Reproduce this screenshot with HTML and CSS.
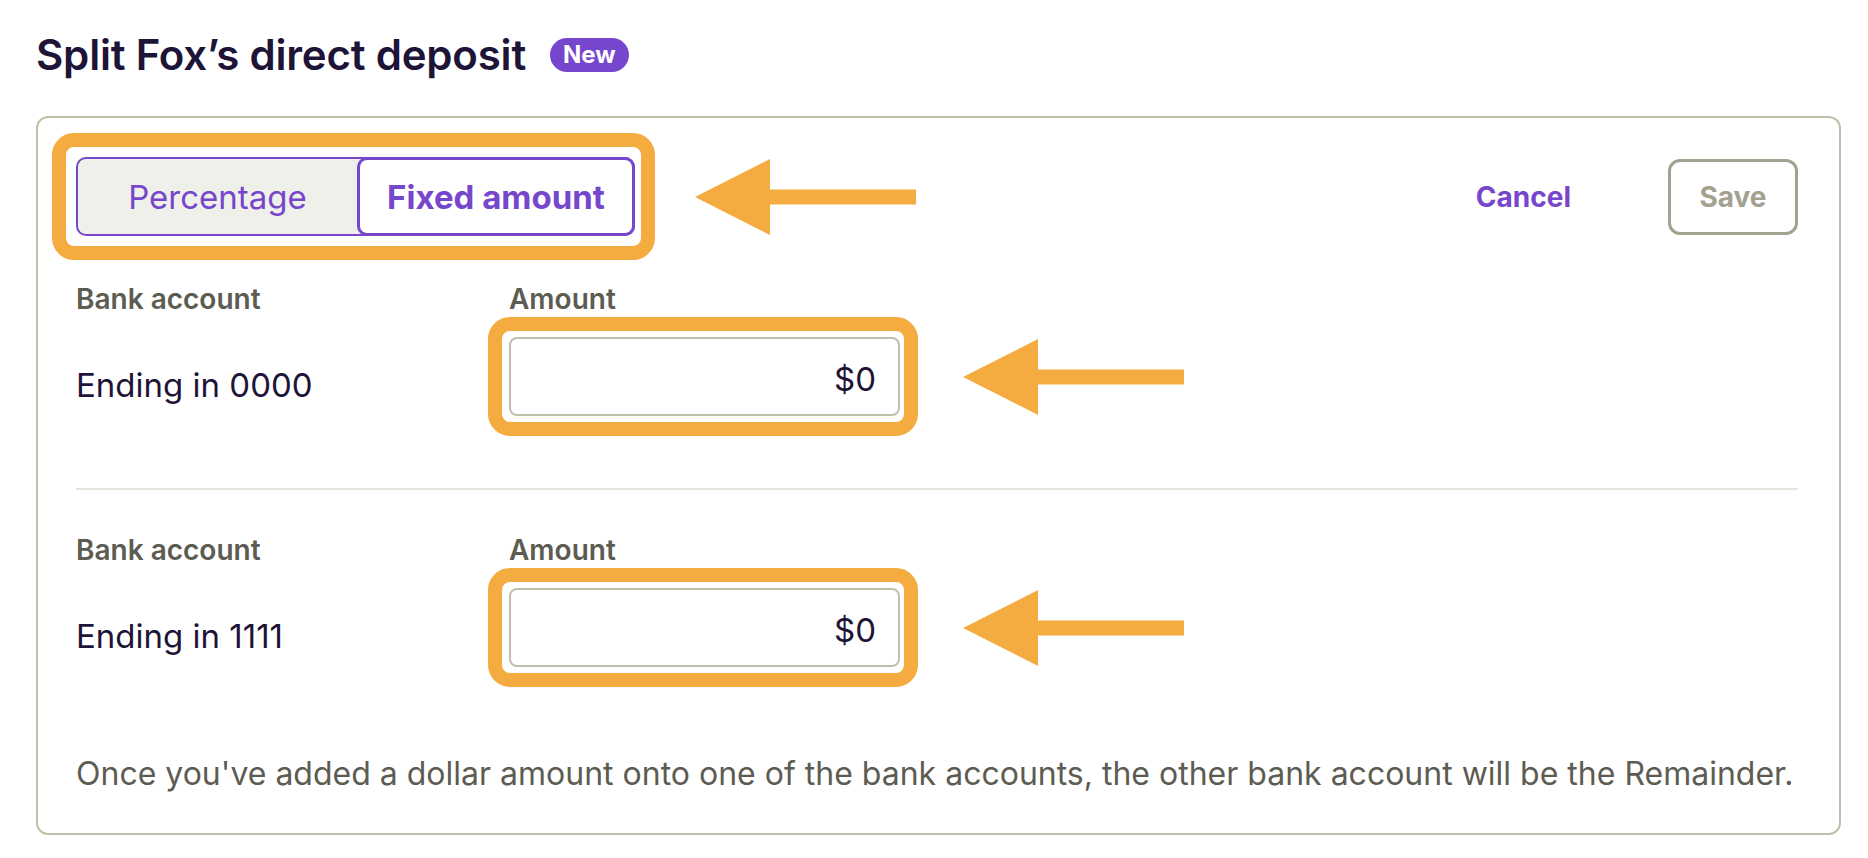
FILE: index.html
```html
<!DOCTYPE html>
<html>
<head>
<meta charset="utf-8">
	<title>Split direct deposit</title>
	<link rel="stylesheet" href="styles.css">
</head>
<body>
	<div class="page">
		<div class="heading">
			<h1>Split Fox’s direct deposit</h1>
			<span class="badge">New</span>
		</div>

		<div class="card">
			<div class="top">
				<div class="mark mark-toggle">
					<div class="toggle">
						<span class="seg">Percentage</span>
						<span class="seg active">Fixed amount</span>
					</div>
					<svg class="arrow" width="221" height="76" viewBox="0 0 221 76" aria-hidden="true"><path d="M0 38 L75 0 V30.5 H221 V45.5 H75 V76 Z" fill="#f4ac40"/></svg>
				</div>
				<div class="actions">
					<a class="cancel" href="#">Cancel</a>
					<button class="save" type="button">Save</button>
				</div>
			</div>

			<!-- bank accounts -->
			<div class="account">
				<div class="col">
					<div class="label">Bank account</div>
					<div class="ending">Ending in 0000</div>
				</div>
				<div class="col">
					<div class="label">Amount</div>
					<div class="mark mark-input">
						<input class="amount" type="text" value="$0">
						<svg class="arrow" width="221" height="76" viewBox="0 0 221 76" aria-hidden="true"><path d="M0 38 L75 0 V30.5 H221 V45.5 H75 V76 Z" fill="#f4ac40"/></svg>
					</div>
				</div>
			</div>
			<div class="account last">
				<div class="col">
					<div class="label">Bank account</div>
					<div class="ending">Ending in 1111</div>
				</div>
				<div class="col">
					<div class="label">Amount</div>
					<div class="mark mark-input">
						<input class="amount" type="text" value="$0">
						<svg class="arrow" width="221" height="76" viewBox="0 0 221 76" aria-hidden="true"><path d="M0 38 L75 0 V30.5 H221 V45.5 H75 V76 Z" fill="#f4ac40"/></svg>
					</div>
				</div>
			</div>

			<p class="note">Once you've added a dollar amount onto one of the bank accounts, the other bank account will be the Remainder.</p>
		</div>
	</div>
</body>
</html>
```

FILE: styles.css
```css
*{
	margin: 0;
	padding: 0;
	box-sizing: border-box;
}
body{
	font-family: Inter, "Noto Sans", sans-serif;
	color: #1d1438;
	background: #fff;
}
.page{
	padding: 30px 27px 0 36px;
}
.heading{
	display: flex;
	align-items: center;
	gap: 24px;
}
.heading h1{
	font-size: 42px;
	line-height: 50px;
	font-weight: 600;
	letter-spacing: -0.2px;
}
.badge{
	background: #7646cc;
	color: #fff;
	font-size: 24px;
	font-weight: 700;
	line-height: 34px;
	padding: 0 13px;
	border-radius: 18px;
}
.card{
	margin-top: 36px;
	border: 2px solid #c2c0ab;
	border-radius: 12px;
	padding: 39px 41px 38px 38px;
}
.top{
	display: flex;
	justify-content: space-between;
	align-items: center;
}

/* orange call-out rings */
.mark{
	position: relative;
	width: fit-content;
	border: 14px solid #f4ac40;
	border-radius: 22px;
	background: #fff;
}
.mark-toggle{
	margin: -24px -20px -24px -24px;
	padding: 10px 6px 10px 10px;
}
.mark-toggle .arrow{
	left: calc(100% + 54px);
}
.mark-input{
	margin: 0 -18px -20px -21px;
	padding: 6px 4px 6px 7px;
}
.mark-input .arrow{
	left: calc(100% + 59px);
}
.arrow{
	position: absolute;
	top: 50%;
	transform: translateY(-50%);
}

.toggle{
	display: grid;
	grid-template-columns: 279px 1fr;
	width: 559px;
	height: 79px;
	border: 2px solid #7646cc;
	border-radius: 10px;
	background: #f0f0eb;
}
.seg{
	display: flex;
	align-items: center;
	justify-content: center;
	font-size: 33px;
	color: #7646cc;
	cursor: pointer;
}
.seg.active{
	margin: -2px -2px -2px 0;
	border: 3px solid #7646cc;
	border-radius: 10px;
	background: #fff;
	font-weight: 700;
}
.actions{
	display: flex;
	align-items: center;
	gap: 97px;
}
.cancel{
	font-size: 28px;
	font-weight: 700;
	color: #7646cc;
	text-decoration: none;
}
.save{
	width: 130px;
	height: 76px;
	border: 3px solid #a3a18f;
	border-radius: 12px;
	background: #fff;
	font-family: inherit;
	font-size: 28px;
	font-weight: 700;
	color: #a3a18f;
}

.account{
	display: grid;
	grid-template-columns: 433px 1fr;
	padding: 45px 0 72px;
	border-bottom: 2px solid #e6e5de;
}
.account.last{
	padding: 42px 0 0;
	border-bottom: 0;
}
.label{
	font-size: 28px;
	line-height: 36px;
	font-weight: 600;
	color: #5d5c52;
}
.ending{
	margin-top: 46px;
	font-size: 33px;
	line-height: 44px;
}
.amount{
	display: block;
	width: 391px;
	height: 79px;
	border: 2px solid #c2c0ab;
	border-radius: 8px;
	padding: 4px 22px 0 0;
	font-family: inherit;
	font-size: 33px;
	color: #1d1438;
	text-align: right;
	outline: none;
}
.note{
	margin-top: 86px;
	font-size: 32px;
	line-height: 42px;
	color: #5d5c52;
}
```
